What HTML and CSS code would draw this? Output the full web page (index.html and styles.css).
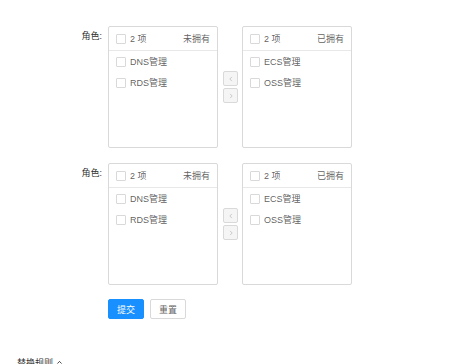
FILE: index.html
```html
<!DOCTYPE html>
<html>
<head>
  <meta charset="UTF-8">
  <title>角色分配</title>
  <link rel="stylesheet" href="styles.css">
</head>
<body>
  <div class="page">
    <div class="form-row">
      <label class="form-label">角色:</label>
      <div class="transfer">
        <div class="transfer-list">
          <div class="list-header">
            <span class="checkbox"></span>
            <span class="count">2 项</span>
            <span class="title">未拥有</span>
          </div>
          <ul class="list-body">
            <li class="list-item"><span class="checkbox"></span><span>DNS管理</span></li>
            <li class="list-item"><span class="checkbox"></span><span>RDS管理</span></li>
          </ul>
        </div>
        <div class="operation">
          <button class="op-btn" disabled>
            <svg viewBox="0 0 10 10" width="6" height="6"><path d="M6.5 1.5 3 5l3.5 3.5" fill="none" stroke="currentColor" stroke-width="1.2"/></svg>
          </button>
          <button class="op-btn" disabled>
            <svg viewBox="0 0 10 10" width="6" height="6"><path d="M3.5 1.5 7 5 3.5 8.5" fill="none" stroke="currentColor" stroke-width="1.2"/></svg>
          </button>
        </div>
        <div class="transfer-list">
          <div class="list-header">
            <span class="checkbox"></span>
            <span class="count">2 项</span>
            <span class="title">已拥有</span>
          </div>
          <ul class="list-body">
            <li class="list-item"><span class="checkbox"></span><span>ECS管理</span></li>
            <li class="list-item"><span class="checkbox"></span><span>OSS管理</span></li>
          </ul>
        </div>
      </div>
    </div>

    <div class="form-row">
      <label class="form-label">角色:</label>
      <div class="transfer">
        <div class="transfer-list">
          <div class="list-header">
            <span class="checkbox"></span>
            <span class="count">2 项</span>
            <span class="title">未拥有</span>
          </div>
          <ul class="list-body">
            <li class="list-item"><span class="checkbox"></span><span>DNS管理</span></li>
            <li class="list-item"><span class="checkbox"></span><span>RDS管理</span></li>
          </ul>
        </div>
        <div class="operation">
          <button class="op-btn" disabled>
            <svg viewBox="0 0 10 10" width="6" height="6"><path d="M6.5 1.5 3 5l3.5 3.5" fill="none" stroke="currentColor" stroke-width="1.2"/></svg>
          </button>
          <button class="op-btn" disabled>
            <svg viewBox="0 0 10 10" width="6" height="6"><path d="M3.5 1.5 7 5 3.5 8.5" fill="none" stroke="currentColor" stroke-width="1.2"/></svg>
          </button>
        </div>
        <div class="transfer-list">
          <div class="list-header">
            <span class="checkbox"></span>
            <span class="count">2 项</span>
            <span class="title">已拥有</span>
          </div>
          <ul class="list-body">
            <li class="list-item"><span class="checkbox"></span><span>ECS管理</span></li>
            <li class="list-item"><span class="checkbox"></span><span>OSS管理</span></li>
          </ul>
        </div>
      </div>
    </div>

    <div class="actions">
      <button class="btn btn-primary">提交</button>
      <button class="btn">重置</button>
    </div>

    <div class="section-toggle">
      <span class="mark">、</span>
      <span class="toggle-text">替换规则</span>
      <svg viewBox="0 0 10 10" width="7" height="7"><path d="M2 6.5 5 3.5 8 6.5" fill="none" stroke="currentColor" stroke-width="1.2"/></svg>
    </div>
  </div>
</body>
</html>
```

FILE: styles.css
```css
* {
  margin: 0;
  padding: 0;
  box-sizing: border-box;
}

body {
  font-family: "Liberation Sans", "Noto Sans CJK SC", sans-serif;
  font-size: 9px;
  color: rgba(0,0,0,0.65);
  background: #fff;
  width: 474px;
  height: 364px;
  overflow: hidden;
}

.page {
  padding-top: 26px;
}

.form-row {
  display: flex;
  margin-bottom: 15px;
}

.form-label {
  width: 108px;
  padding-right: 6px;
  text-align: right;
  line-height: 20px;
  color: rgba(0,0,0,0.85);
}

.transfer {
  display: flex;
  align-items: center;
}

.transfer-list {
  width: 110px;
  height: 122px;
  border: 1px solid #d9d9d9;
  border-radius: 2px;
}

.list-header {
  height: 24px;
  padding: 0 7px;
  display: flex;
  align-items: center;
  border-bottom: 1px solid #e8e8e8;
}

.checkbox {
  width: 10px;
  height: 10px;
  border: 1px solid #d9d9d9;
  border-radius: 1px;
  background: #fff;
  flex-shrink: 0;
}

.count {
  margin-left: 4px;
}

.title {
  margin-left: auto;
}

.list-body {
  list-style: none;
}

.list-item {
  height: 21px;
  padding: 0 7px;
  display: flex;
  align-items: center;
  gap: 4px;
}

.operation {
  display: flex;
  flex-direction: column;
  gap: 2px;
  margin: 0 4px 0 5px;
}

.op-btn {
  width: 15px;
  height: 15px;
  border: 1px solid #d9d9d9;
  border-radius: 2px;
  background: #f5f5f5;
  color: rgba(0,0,0,0.25);
  display: flex;
  align-items: center;
  justify-content: center;
}

.actions {
  display: flex;
  gap: 6px;
  padding-left: 108px;
  margin-top: -1px;
}

.btn {
  width: 36px;
  height: 20px;
  border: 1px solid #d9d9d9;
  border-radius: 2px;
  background: #fff;
  color: rgba(0,0,0,0.65);
  font-family: inherit;
  font-size: 9px;
}

.btn-primary {
  background: #1890ff;
  border-color: #1890ff;
  color: #fff;
}

.section-toggle {
  display: flex;
  align-items: center;
  gap: 3px;
  margin-top: 37px;
  color: rgba(0,0,0,0.85);
  font-size: 9px;
}

.mark {
  width: 14px;
  color: rgba(0,0,0,0.45);
}
```
